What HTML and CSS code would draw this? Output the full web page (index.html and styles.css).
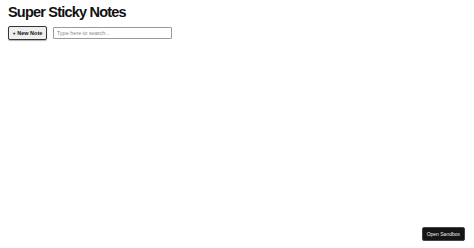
FILE: index.html
```html
<!DOCTYPE html>
<html>
<head>
<meta charset="utf-8">
<link rel="stylesheet" href="styles.css">
</head>
<body>
<div class="app">
  <h1 class="title">Super Sticky Notes</h1>
  <div class="toolbar">
    <button class="add-btn">+ New Note</button>
    <input class="search" type="text" placeholder="Type here to search...">
  </div>
</div>
<a class="sandbox-btn">Open Sandbox</a>
</body>
</html>
```
FILE: styles.css
```css
html, body {
  margin: 0;
  padding: 0;
  background: #ffffff;
}
body {
  font-family: "Liberation Sans", Arial, sans-serif;
  color: #111;
  width: 474px;
  height: 248px;
  overflow: hidden;
}
.app {
  padding: 4px 8px 0 8px;
}
.title {
  margin: 0;
  font-size: 14.5px;
  line-height: 17px;
  font-weight: bold;
  letter-spacing: -0.8px;
}
.toolbar {
  display: flex;
  align-items: center;
  gap: 6px;
  margin-top: 5px;
}
.add-btn {
  font-family: "Liberation Sans", Arial, sans-serif;
  font-size: 5.5px;
  font-weight: bold;
  height: 14px;
  padding: 0 3.5px;
  background: #eeeeee;
  border: 1.5px solid #333;
  border-radius: 2px;
  color: #111;
  box-shadow: 0 1px 1px rgba(0,0,0,0.3);
}
.search {
  font-family: "Liberation Sans", Arial, sans-serif;
  font-size: 5.5px;
  width: 119px;
  height: 12px;
  box-sizing: border-box;
  padding: 0 3px;
  border: 1px solid #999;
  border-radius: 1px;
}
.search::placeholder {
  color: #888;
}
.sandbox-btn {
  position: fixed;
  right: 9px;
  bottom: 7px;
  background: #151515;
  color: #eee;
  font-size: 5px;
  height: 12px;
  line-height: 12px;
  padding: 0 4px;
  border-radius: 2px;
  border: 1px solid #444;
}
```
